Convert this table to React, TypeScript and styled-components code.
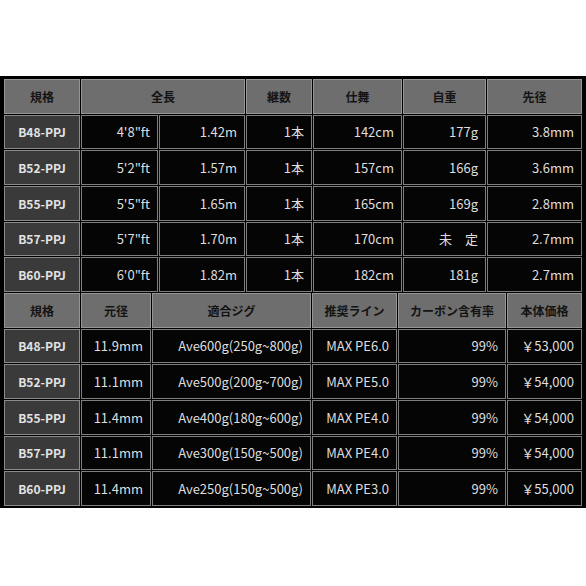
import React from 'react'
import styled, { createGlobalStyle } from 'styled-components'

const GlobalStyle = createGlobalStyle`
  html, body {
    margin: 0;
    padding: 0;
    background: #ffffff;
  }
  body {
    font-family: "Noto Sans CJK JP", "Noto Sans", sans-serif;
  }
`

const upperCols = [76, 77, 86, 66, 89, 83, 95]
const lowerCols = [76, 70, 159, 85, 108, 75]

const upperRows = [
  ['B48-PPJ', `4'8"ft`, '1.42m', '1本', '142cm', '177g', '3.8mm'],
  ['B52-PPJ', `5'2"ft`, '1.57m', '1本', '157cm', '166g', '3.6mm'],
  ['B55-PPJ', `5'5"ft`, '1.65m', '1本', '165cm', '169g', '2.8mm'],
  ['B57-PPJ', `5'7"ft`, '1.70m', '1本', '170cm', '未　定', '2.7mm'],
  ['B60-PPJ', `6'0"ft`, '1.82m', '1本', '182cm', '181g', '2.7mm']
]

const lowerHead = ['規格', '元径', '適合ジグ', '推奨ライン', 'カーボン含有率', '本体価格']

const lowerRows = [
  ['B48-PPJ', '11.9mm', 'Ave600g(250g~800g)', 'MAX PE6.0', '99%', '￥53,000'],
  ['B52-PPJ', '11.1mm', 'Ave500g(200g~700g)', 'MAX PE5.0', '99%', '￥54,000'],
  ['B55-PPJ', '11.4mm', 'Ave400g(180g~600g)', 'MAX PE4.0', '99%', '￥54,000'],
  ['B57-PPJ', '11.1mm', 'Ave300g(150g~500g)', 'MAX PE4.0', '99%', '￥54,000'],
  ['B60-PPJ', '11.4mm', 'Ave250g(150g~500g)', 'MAX PE3.0', '99%', '￥55,000']
]

const App = () => {
  return (
    <>
      <GlobalStyle />
      <Page>
        <Panel>
          <SpecTable cols={upperCols}>
            <HeadCell>規格</HeadCell>
            <HeadCell span={2}>全長</HeadCell>
            <HeadCell>継数</HeadCell>
            <HeadCell>仕舞</HeadCell>
            <HeadCell>自重</HeadCell>
            <HeadCell>先径</HeadCell>
            {upperRows.map((row) =>
              row.map((value, i) =>
                i === 0 ? (
                  <ModelCell key={row[0] + i}>{value}</ModelCell>
                ) : (
                  <DataCell key={row[0] + i}>{value}</DataCell>
                )
              )
            )}
          </SpecTable>
          <SpecTable cols={lowerCols}>
            {lowerHead.map((title) => (
              <HeadCell key={title}>{title}</HeadCell>
            ))}
            {lowerRows.map((row) =>
              row.map((value, i) =>
                i === 0 ? (
                  <ModelCell key={row[0] + i}>{value}</ModelCell>
                ) : (
                  <DataCell key={row[0] + i}>{value}</DataCell>
                )
              )
            )}
          </SpecTable>
        </Panel>
      </Page>
    </>
  )
}

const Page = styled.div`
  width: 586px;
  height: 586px;
  padding-top: 76px;
  box-sizing: border-box;
  background: #ffffff;
`
const Panel = styled.div`
  background: #000000;
  padding: 3px 4px 2px 4px;
  display: flex;
  flex-direction: column;
  gap: 1px;
`
const SpecTable = styled.div<{ cols: number[] }>`
  display: grid;
  grid-template-columns: ${({ cols }) => cols.map((c) => c + 'px').join(' ')};
  grid-auto-rows: 34.67px;
  gap: 1px;
`
const Cell = styled.div`
  box-sizing: border-box;
  border: 1px solid #7e7e7e;
  display: flex;
  align-items: center;
  white-space: nowrap;
  overflow: hidden;
`
const HeadCell = styled(Cell)<{ span?: number }>`
  grid-column: span ${({ span }) => span || 1};
  justify-content: center;
  background: #6e6e6e;
  border-color: #969696;
  color: #141414;
  font-size: 12px;
  font-weight: 700;
`
const ModelCell = styled(Cell)`
  justify-content: center;
  background: #3a3a3a;
  border-color: #8a8a8a;
  color: #e2e2e2;
  font-size: 12px;
  font-weight: 700;
`
const DataCell = styled(Cell)`
  justify-content: flex-end;
  padding-right: 7px;
  background: #050505;
  color: #dedede;
  font-size: 13px;
`

export default App
